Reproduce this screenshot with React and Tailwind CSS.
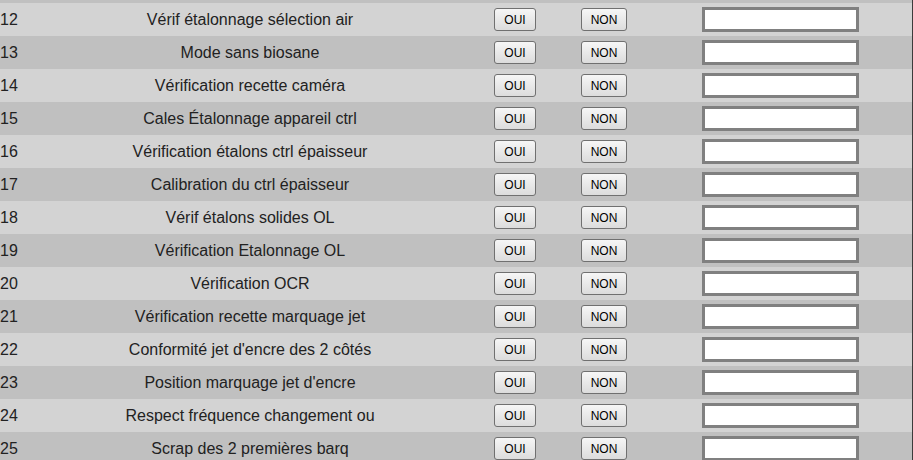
const rows = [
  [12, "Vérif étalonnage sélection air"],
  [13, "Mode sans biosane"],
  [14, "Vérification recette caméra"],
  [15, "Cales Étalonnage appareil ctrl"],
  [16, "Vérification étalons ctrl épaisseur"],
  [17, "Calibration du ctrl épaisseur"],
  [18, "Vérif étalons solides OL"],
  [19, "Vérification Etalonnage OL"],
  [20, "Vérification OCR"],
  [21, "Vérification recette marquage jet"],
  [22, "Conformité jet d'encre des 2 côtés"],
  [23, "Position marquage jet d'encre"],
  [24, "Respect fréquence changement ou"],
  [25, "Scrap des 2 premières barq"],
]

const btn =
  "h-[23px] rounded-[3px] border border-[#707070] bg-gradient-to-b from-[#f6f6f6] to-[#dcdcdc] text-[12px] leading-none text-black"

const CheckRow = ({ num, label, dark }) => (
  <div className={`flex h-[33px] items-center ${dark ? "bg-[#c0c0c0]" : "bg-[#d3d3d3]"}`}>
    <span className="w-[60px] text-[16px] text-[#222]">{num}</span>
    <span className="w-[380px] text-center text-[16px] text-[#222]">{label}</span>
    <button className={`${btn} ml-[54px] w-[42px]`}>OUI</button>
    <button className={`${btn} ml-[45px] w-[46px]`}>NON</button>
    <input type="text" className="ml-[75px] h-[25px] w-[157px] border-[3px] border-[#808080] bg-white outline-none" />
  </div>
)

export default function App() {
  return (
    <div
      className="h-[460px] w-[913px] overflow-hidden border-r border-[#3c3c3c] bg-[#c0c0c0]"
      style={{ fontFamily: '"Liberation Sans", Arial, sans-serif' }}
    >
      <div className="h-[3px] bg-[#c0c0c0]" />
      {rows.map(([num, label], i) => (
        <CheckRow key={num} num={num} label={label} dark={i % 2 === 1} />
      ))}
    </div>
  )
}
